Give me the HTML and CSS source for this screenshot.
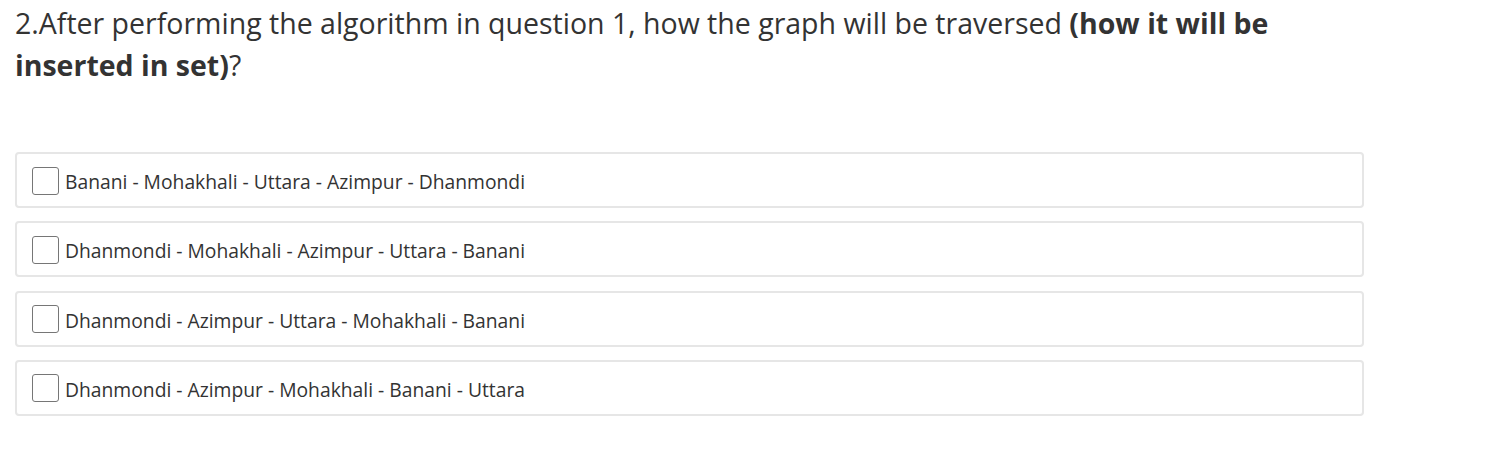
FILE: index.html
```html
<!DOCTYPE html>
<html>
<head>
<meta charset="utf-8">
<link rel="stylesheet" href="styles.css">
</head>
<body>
<div class="question">
  <p class="title">2.After performing the algorithm in question 1, how the graph will be traversed <b>(how it will be inserted in set)</b>?</p>
  <div class="options">
    <label class="option"><span class="box"></span><span class="text">Banani - Mohakhali - Uttara - Azimpur - Dhanmondi</span></label>
    <label class="option"><span class="box"></span><span class="text">Dhanmondi - Mohakhali - Azimpur - Uttara - Banani</span></label>
    <label class="option"><span class="box"></span><span class="text">Dhanmondi - Azimpur - Uttara - Mohakhali - Banani</span></label>
    <label class="option"><span class="box"></span><span class="text">Dhanmondi - Azimpur - Mohakhali - Banani - Uttara</span></label>
  </div>
</div>
</body>
</html>
```
FILE: styles.css
```css
html, body {
  margin: 0;
  padding: 0;
  background: #fff;
}
body {
  font-family: "Open Sans", "Noto Sans", sans-serif;
  color: #333;
}
.question {
  padding: 0 121px 0 15px;
}
.title {
  margin: 0;
  padding-top: 2px;
  font-size: 28.5px;
  line-height: 42px;
  color: #333;
  width: 1290px;
}
.title b {
  font-weight: 700;
}
.options {
  margin-top: 66px;
  display: flex;
  flex-direction: column;
  gap: 13.3px;
}
.option {
  display: flex;
  align-items: center;
  height: 56px;
  box-sizing: border-box;
  border: 2px solid #e6e6e6;
  border-radius: 4px;
  padding-left: 15px;
  gap: 6px;
}
.box {
  width: 25px;
  height: 26px;
  border: 1px solid #767676;
  border-radius: 3px;
  background: #fff;
  flex: none;
  margin-top: 1px;
}
.text {
  font-size: 19.3px;
  color: #333;
  padding-top: 3px;
}
```
